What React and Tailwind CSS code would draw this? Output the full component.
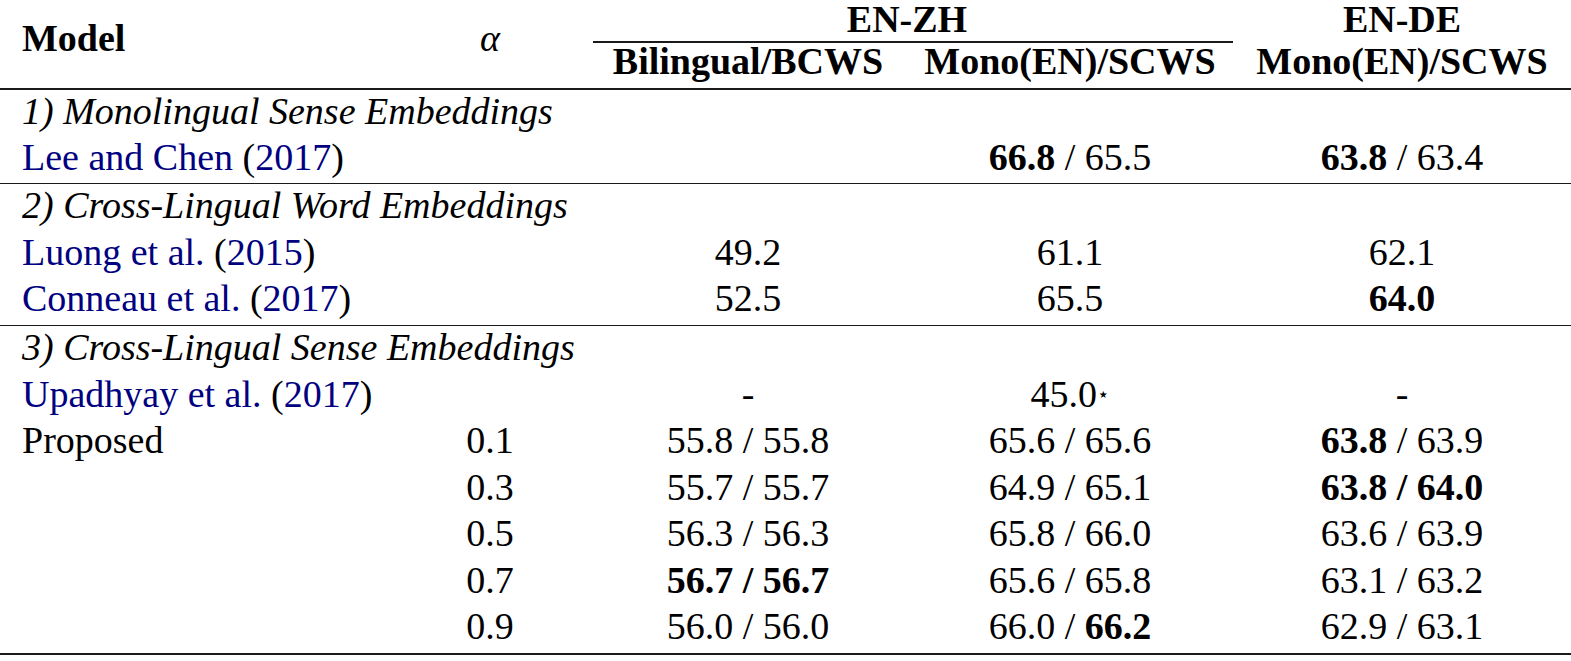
import React from "react";

const COLS = "grid grid-cols-[408px_120px_42px_312px_332px_332px]";

function Cite({ name, year }) {
  return (
    <span>
      <span className="text-[#000080]">{name}</span> (
      <span className="text-[#000080]">{year}</span>)
    </span>
  );
}

function Row({ label, alpha, a, b, c }) {
  return (
    <div className={`${COLS} h-[46.5px] items-center leading-[46.5px]`}>
      <div className="whitespace-nowrap">{label}</div>
      <div className="text-center">{alpha}</div>
      <div />
      <div className="text-center whitespace-nowrap">{a}</div>
      <div className="text-center whitespace-nowrap">{b}</div>
      <div className="text-center whitespace-nowrap">{c}</div>
    </div>
  );
}

function SectionTitle({ children }) {
  return (
    <div className="h-[46.5px] leading-[46.5px] italic whitespace-nowrap">{children}</div>
  );
}

const B = ({ children }) => <span className="font-bold">{children}</span>;

function Rule({ thick }) {
  return <div className={`-ml-[22px] w-[1571px] bg-[#1a1a1a] ${thick ? "h-[2px]" : "h-[1.5px]"}`} />;
}

export default function App() {
  return (
    <div className="w-[1571px] h-[661px] bg-white overflow-hidden pl-[22px] text-black text-[38px] font-['Liberation_Serif']">
      {/* Header */}
      <div className={`${COLS} grid-rows-[41px_1.5px_45.5px] h-[88px]`}>
        <div className="row-span-3 flex items-center font-bold pb-[12px]">Model</div>
        <div className="row-span-3 flex items-center justify-center italic pb-[12px]">α</div>
        <div className="row-span-3" />
        <div className="col-span-2 flex items-start justify-center font-bold leading-[32px] pt-[3px] pr-[14px]">EN-ZH</div>
        <div className="flex items-start justify-center font-bold leading-[32px] pt-[3px]">EN-DE</div>
        <div className="col-span-2 ml-[1px] mr-[3px] bg-[#1a1a1a]" />
        <div />
        <div className="flex items-center justify-center font-bold whitespace-nowrap pb-[7px]">Bilingual/BCWS</div>
        <div className="flex items-center justify-center font-bold whitespace-nowrap pb-[7px]">Mono(EN)/SCWS</div>
        <div className="flex items-center justify-center font-bold whitespace-nowrap pb-[7px]">Mono(EN)/SCWS</div>
      </div>
      <Rule />
      <div className="-mt-[2px]">
        <SectionTitle>1) Monolingual Sense Embeddings</SectionTitle>
        <Row
          label={<Cite name="Lee and Chen" year="2017" />}
          a=""
          b={<><B>66.8</B> / 65.5</>}
          c={<><B>63.8</B> / 63.4</>}
        />
      </div>
      <div className="h-[2px]" />
      <Rule />
      <div className="-mt-[2px]">
        <SectionTitle>2) Cross-Lingual Word Embeddings</SectionTitle>
        <Row label={<Cite name="Luong et al." year="2015" />} a="49.2" b="61.1" c="62.1" />
        <Row label={<Cite name="Conneau et al." year="2017" />} a="52.5" b="65.5" c={<B>64.0</B>} />
      </div>
      <div className="h-[3px]" />
      <Rule />
      <div className="-mt-[2px]">
        <SectionTitle>3) Cross-Lingual Sense Embeddings</SectionTitle>
        <Row
          label={<Cite name="Upadhyay et al." year="2017" />}
          a="-"
          b={<>45.0<sup className="text-[20px] relative -top-[6px] font-['DejaVu_Sans']">⋆</sup></>}
          c="-"
        />
        <Row label="Proposed" alpha="0.1" a="55.8 / 55.8" b="65.6 / 65.6" c={<><B>63.8</B> / 63.9</>} />
        <Row alpha="0.3" a="55.7 / 55.7" b="64.9 / 65.1" c={<B>63.8 / 64.0</B>} />
        <Row alpha="0.5" a="56.3 / 56.3" b="65.8 / 66.0" c="63.6 / 63.9" />
        <Row alpha="0.7" a={<B>56.7 / 56.7</B>} b="65.6 / 65.8" c="63.1 / 63.2" />
        <Row alpha="0.9" a="56.0 / 56.0" b={<>66.0 / <B>66.2</B></>} c="62.9 / 63.1" />
      </div>
      <div className="h-[3px]" />
      <Rule thick />
    </div>
  );
}
